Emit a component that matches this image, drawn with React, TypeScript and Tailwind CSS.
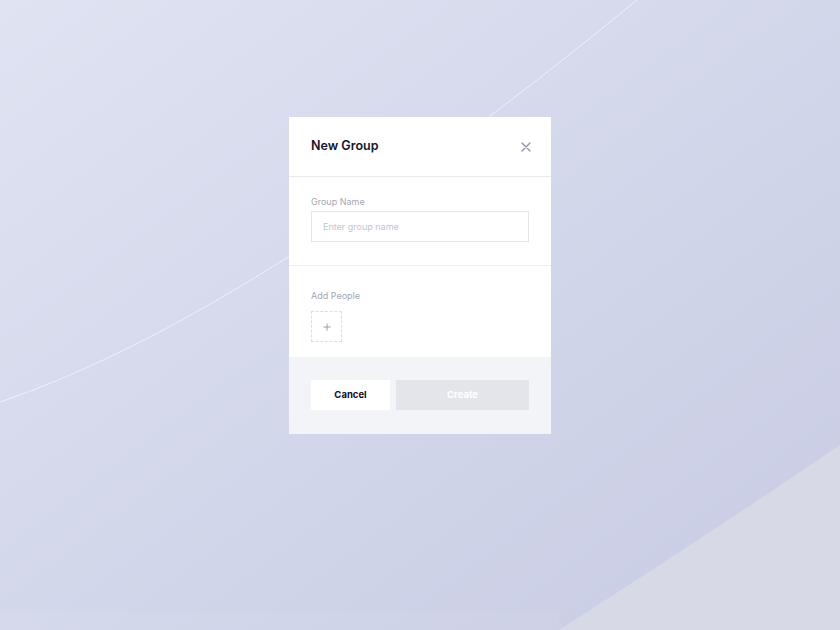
const Backdrop = () => {
  return (
    <svg className="absolute inset-0" width={840} height={630} viewBox="0 0 840 630">
      <defs>
        <linearGradient id="bg" x1="0" y1="0" x2="1" y2="1">
          <stop offset="0" stopColor="#e0e3f2" />
          <stop offset="1" stopColor="#c6cbe3" />
        </linearGradient>
      </defs>
      <rect width={840} height={630} fill="url(#bg)" />
      {/* faint lighter area beyond the thin curve */}
      <path d="M0,402 Q250,318 637,0 L840,0 L840,445 Q700,540 559,630 L0,630 Z" fill="#ffffff" opacity={0.02} />
      <path d="M0,402 Q250,318 637,0" fill="none" stroke="#eef0f8" strokeWidth={1} />
      {/* bottom-right lighter shape */}
      <path d="M559,630 Q700,540 840,445 L840,630 Z" fill="#d7d9e7" />
      <rect x={0} y={612} width={559} height={18} fill="#ffffff" opacity={0.05} />
    </svg>
  );
};

const App = () => {
  return (
    <div className="relative w-[840px] h-[630px] overflow-hidden font-['Inter','Liberation_Sans',sans-serif]">
      <Backdrop />

      <div className="relative flex justify-center pt-[117px]">
        <div className="w-[262px] bg-white">
          <div className="flex items-center justify-between h-[60px] pl-[22px] pr-[22px] border-b border-[#e8e9ef]">
            <div className="text-[12.5px] font-semibold text-[#15152a]">New Group</div>
            <svg width={10} height={10} viewBox="0 0 10 10" className="mr-[-2px]">
              <path d="M1 1 L9 9 M9 1 L1 9" stroke="#8b8e9f" strokeWidth={1.2} strokeLinecap="round" />
            </svg>
          </div>

          <div className="px-[22px] pt-[19px] pb-[23px] border-b border-[#eceef3]">
            <div className="text-[9px] leading-[12px] text-[#a3a6b5] mb-[3px]">Group Name</div>
            <input
              type="text"
              placeholder="Enter group name"
              className="w-full h-[31px] px-[11px] text-[9px] text-[#15152a] placeholder:text-[#c2c5cf] border border-[#e4e6eb] outline-none"
            />
          </div>

          <div className="px-[22px] pt-[24px] pb-[15px]">
            <div className="text-[9px] leading-[12px] text-[#a3a6b5] mb-[9px]">Add People</div>
            <div className="flex items-center justify-center w-[31px] h-[31px] border border-dashed border-[#dcdee5]">
              <svg width={8} height={8} viewBox="0 0 8 8">
                <path d="M4 0.5 V7.5 M0.5 4 H7.5" stroke="#999cab" strokeWidth={1} />
              </svg>
            </div>
          </div>

          <div className="flex gap-[6px] px-[22px] pt-[23px] pb-[24px] bg-[#f3f4f8]">
            <button className="w-[79px] h-[30px] bg-white text-[9.5px] font-bold text-[#0e0e1e]">Cancel</button>
            <button className="flex-1 h-[30px] bg-[#e4e5ea] text-[9.5px] font-bold text-white">Create</button>
          </div>
        </div>
      </div>
    </div>
  );
};

export default App;
